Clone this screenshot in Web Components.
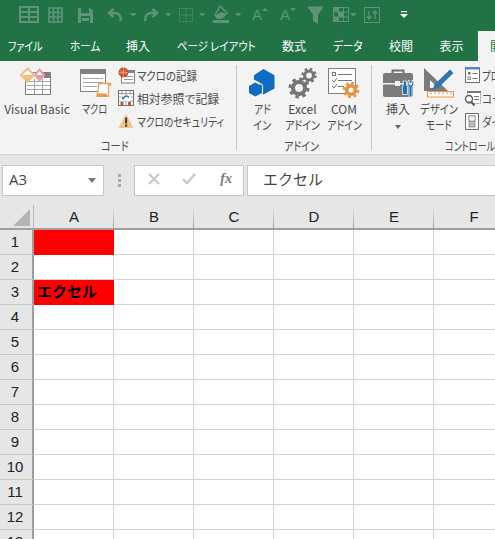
<!DOCTYPE html>
<html lang="ja">
<head>
<meta charset="utf-8">
<style>
  html, body { margin: 0; padding: 0; height: 539px; overflow: hidden; background: #fff; }
  body { font-family: "Noto Sans CJK JP", "Noto Sans", sans-serif; width: 495px; }
</style>
</head>
<body>
<excel-qat></excel-qat>
<excel-tabs></excel-tabs>
<excel-ribbon>
  <ribbon-group label="コード" label-w="28" width="237">
    <big-button w="74"><svg-icon name="vb"></svg-icon><span>Visual Basic</span></big-button>
    <big-button w="40"><svg-icon name="macro" style="margin:2px 0 0 4px"></svg-icon><span><narrow-text w="25">マクロ</narrow-text></span></big-button>
    <small-column>
      <small-button text="マクロの記録" w="60"><svg-icon name="rec"></svg-icon></small-button>
      <small-button text="相対参照で記録" w="82"><svg-icon name="rel"></svg-icon></small-button>
      <small-button text="マクロのセキュリティ" w="87"><svg-icon name="warn"></svg-icon></small-button>
    </small-column>
  </ribbon-group>
  <ribbon-group label="アドイン" label-w="35" width="135" pad="8">
    <big-button w="34"><svg-icon name="addin" style="margin-top:2px"></svg-icon><span><narrow-text w="17">アド</narrow-text><br><narrow-text w="18">イン</narrow-text></span></big-button>
    <big-button w="47"><svg-icon name="gears" style="margin-top:2px"></svg-icon><span>Excel<br><narrow-text w="35">アドイン</narrow-text></span></big-button>
    <big-button w="36"><svg-icon name="com" style="margin-top:2px"></svg-icon><span>COM<br><narrow-text w="35">アドイン</narrow-text></span></big-button>
  </ribbon-group>
  <ribbon-group label="コントロール" label-w="50" width="200" pad="3" last>
    <big-button w="46"><svg-icon name="tools" style="margin-top:2px"></svg-icon><span>挿入<br><caret-mark></caret-mark></span></big-button>
    <big-button w="36"><svg-icon name="design" style="margin-top:1px"></svg-icon><span><narrow-text w="38">デザイン</narrow-text><br><narrow-text w="26">モード</narrow-text></span></big-button>
    <small-column style="margin-left:7px">
      <small-button text="プロパティ" w="42" gap="1"><svg-icon name="prop"></svg-icon></small-button>
      <small-button text="コードの表示" w="60" gap="1"><svg-icon name="code"></svg-icon></small-button>
      <small-button text="ダイアログの実行" w="80" gap="1"><svg-icon name="dlg"></svg-icon></small-button>
    </small-column>
  </ribbon-group>
</excel-ribbon>
<formula-bar cell="A3" value="エクセル"></formula-bar>
<sheet-grid></sheet-grid>

<script>
// アイコンは全部ここにまとめる
const G = '#808080';
const Q = '#5f9479';
const ICONS = {
  vb: [34, 32, `
    <rect x="5.5" y="6.5" width="25" height="22" fill="#fff" stroke="${G}"/>
    <rect x="24" y="6" width="7" height="6" fill="${G}"/>
    <path d="M7 15.500h23M7 19.500h23M7 23.500h23M14.500 13v15M22.500 13v15" stroke="#a6a6a6" fill="none"/>
    <path d="M7.500 2.500l6.500 6.500-6.500 6.500-6.500-6.500z" fill="#fff" stroke="#edc07f" stroke-width="2"/>
    <path d="M2 9l5.500 6 6-6z" fill="#edc07f"/>
    <path d="M19.500 3.500l4.500 5.500-4.500 5.500-4.500-5.500z" fill="#fff" stroke="#e79aa6" stroke-width="2"/>
    <path d="M15.500 9l4 5 4-5z" fill="#e79aa6"/>`],
  macro: [32, 30, `
    <rect x="0.500" y="1.500" width="25" height="22" fill="#fff" stroke="${G}"/>
    <rect x="0" y="1" width="26" height="5" fill="${G}"/>
    <path d="M3 10.500h20M3 14.500h20M3 18.500h14" stroke="#a6a6a6" fill="none"/>
    <path d="M19 15.500h11.500v1.500h-2v11h-11z" fill="#fff" stroke="#e9a15b" stroke-width="1.300"/>
    <path d="M16.500 25.500h10l1 3.500h-11z" fill="#e9974a"/>`],
  rec: [17, 17, `
    <rect x="3.500" y="3.500" width="13" height="12.500" fill="#fff" stroke="${G}"/>
    <rect x="9" y="3" width="8" height="3" fill="${G}"/>
    <path d="M6 9.500h9M6 12.500h9" stroke="#999"/>
    <circle cx="5.500" cy="5.500" r="5" fill="#c9502a"/>
    <path d="M2 3.500l7 4M2.500 7.500l6-5M5.500 1v9M1 5.500h9" stroke="#ee9c6c" stroke-width=".8"/>`],
  rel: [17, 17, `
    <rect x=".5" y=".5" width="15" height="15" fill="#fff" stroke="#6e6e6e"/>
    <path d="M.5 3.500h15M.5 7h15M.5 11h15M4 .5v15M8 .5v15M12 .5v15" stroke="#8a8a8a" stroke-width=".8"/>
    <rect x="3" y="5" width="10" height="6" fill="#fff"/>
    <path d="M5 9c.5-3 4-4 6-1.500" stroke="#2a7ab8" stroke-width="1.500" fill="none"/>
    <path d="M3.500 6.500l3 1-2 2.500z" fill="#2a7ab8"/>
    <rect x="2.500" y="12" width="3" height="3" fill="#c8562e"/><rect x="10" y="12" width="3" height="3" fill="#c8562e"/>`],
  warn: [17, 17, `
    <path d="M8 1l7.500 14h-15z" fill="#eec689"/>
    <rect x="7" y="4.500" width="2.200" height="6" fill="#444"/>
    <rect x="7" y="11.500" width="2.200" height="2.200" fill="#444"/>`],
  addin: [28, 30, `
    <path d="M15.500 1l11 6.200v13.300l-11 6-4-2.200v-9.800l-5.500-3v-4.300z" fill="#0f6cc4"/>
    <path d="M7.300 14.500l6.400 3.400v7l-6.400 3.600-6.300-3.600v-7z" fill="#0f6cc4"/>
    <path d="M14.600 17l-7.300-3.800" stroke="#f3f3f3" stroke-width="1.200"/><path d="M14.500 17.500v8" stroke="#f3f3f3" stroke-width="1.200"/>`],
  gears: [28, 31, `
    <g fill="none" stroke="#757575">
      <circle cx="10" cy="20" r="6" stroke-width="4"/>
      <circle cx="10" cy="20" r="9" stroke-width="3" stroke-dasharray="3.500 3.560"/>
      <circle cx="20" cy="7.500" r="4.400" stroke-width="3"/>
      <circle cx="20" cy="7.500" r="6.500" stroke-width="2.400" stroke-dasharray="2.500 2.600"/>
    </g>`],
  com: [32, 32, `
    <rect x=".5" y=".5" width="27" height="25" fill="#fff" stroke="${G}"/>
    <rect x="4.500" y="4.500" width="3" height="3" fill="none" stroke="#777"/>
    <path d="M10 6.500h14M10 12.500h14M10 18.500h6" stroke="#777" fill="none"/>
    <path d="M4 12l2 2 3-4M4 18l2 2 3-4" stroke="#777" fill="none"/>
    <circle cx="23" cy="22" r="4.300" fill="none" stroke="#e8933c" stroke-width="3.600"/>
    <circle cx="23" cy="22" r="7" fill="none" stroke="#e8933c" stroke-width="2.600" stroke-dasharray="2.800 2.700"/>`],
  tools: [31, 31, `
    <path d="M9.500 5V2.500h11V5" fill="none" stroke="#6f6f6f" stroke-width="2"/>
    <path d="M2 5h26a2 2 0 0 1 2 2v8H0V7a2 2 0 0 1 2-2z" fill="#7a7a7a"/>
    <path d="M0 16.500h30V27a2 2 0 0 1-2 2H2a2 2 0 0 1-2-2z" fill="#7a7a7a"/>
    <rect x="12" y="13" width="5" height="5" fill="#f3f3f3"/>
    <path d="M20 13h3.500v4l1 1.500v8h-5v-8l1-1.500z" fill="#1f6fb5" stroke="#f3f3f3" stroke-width=".8"/>
    <path d="M26 12v4l1.500 1.500L29 16v-4c2 1 2.500 4 1 6l-1 1v10h-3V19c-2-2-2-5 0-7z" fill="#1f6fb5" stroke="#f3f3f3" stroke-width=".8"/>`],
  design: [32, 31, `
    <path d="M1 1l24 23H1z" fill="#7a7a7a"/>
    <path d="M7 13l8 8H7z" fill="#f3f3f3"/>
    <path d="M27 2.500l3.500 3.500L15 21l-5.500 2 2-5.500z" fill="#2e75b6"/>
    <rect x="4.500" y="24.500" width="26" height="5.500" fill="#fff" stroke="#e6964a"/>
    <path d="M8 25v2.500M12 25v2.500M16 25v2.500M20 25v2.500M24 25v2.500M28 25v2.500" stroke="#e6964a"/>`],
  prop: [16, 17, `
    <rect x=".5" y=".5" width="14" height="15" fill="#fff" stroke="#6e6e6e"/>
    <rect x="0" y="0" width="15" height="2.500" fill="#4d88c4"/>
    <rect x="3" y="5" width="2.500" height="2.500" fill="#6e6e6e"/><rect x="3" y="10" width="2.500" height="2.500" fill="none" stroke="#6e6e6e" stroke-width=".8"/>
    <path d="M7.500 6.500h5M7.500 11.500h5" stroke="#6e6e6e"/>`],
  code: [17, 17, `
    <rect x="3.500" y="1.500" width="13" height="12" fill="#fff" stroke="#999" stroke-dasharray="2 1"/>
    <rect x="3" y="1" width="14" height="2" fill="#777"/>
    <path d="M10 6.500h5M10 9.500h5" stroke="#777"/>
    <circle cx="5" cy="9" r="3.500" fill="#fff" stroke="#5c5c5c" stroke-width="1.400"/>
    <path d="M7.500 12l3 3.500" stroke="#5c5c5c" stroke-width="2"/>`],
  dlg: [16, 18, `
    <rect x=".5" y=".5" width="13" height="16" fill="#fff" stroke="#6e6e6e"/>
    <rect x="4" y="3" width="6" height="11" fill="#bdbdbd" stroke="#6e6e6e" stroke-width=".6"/>
    <rect x="4" y="3" width="6" height="5" fill="#f3f3f3" stroke="#6e6e6e" stroke-width=".6"/>`],
  // クイックアクセス
  q1: [20, 17, `<path d="M1 1h18v15H1zM1 6h18M1 11h18M10 1v15" fill="none" stroke="${Q}" stroke-width="2"/>`],
  q2: [15, 16, `<path d="M1 1h13v14H1zM1 5.500h13M1 10h13M5.500 1v14M10 1v14" fill="none" stroke="${Q}" stroke-width="1.700"/>`],
  q3: [15, 16, `<path d="M0 1h12l3 3v12H0z" fill="${Q}"/><rect x="3" y="1" width="8" height="5" fill="#217346"/><rect x="3" y="9" width="9" height="7" fill="#217346"/><rect x="4" y="11" width="7" height="3" fill="${Q}"/>`],
  undo: [15, 14, `<path d="M13.500 13c1-5-1.500-8-5.500-8H2.500M6.500 1L2 5l4.500 4" fill="none" stroke="${Q}" stroke-width="2.400"/>`],
  redo: [15, 14, `<path d="M1.500 13c-1-5 1.500-8 5.500-8h5.500M8.500 1L13 5l-4.500 4" fill="none" stroke="${Q}" stroke-width="2.400"/>`],
  arrow: [7, 4, `<path d="M0 0h6.500L3.250 3.500z" fill="${Q}"/>`],
  bord: [14, 14, `<path d="M.5.500h13v13H.500zM.5 7h13M7 .500v13" fill="none" stroke="${Q}" stroke-dasharray="1 1"/>`],
  fill: [16, 17, `<rect x="0" y="14" width="16" height="3" fill="${Q}"/><path d="M7 0l7 7-5 5H4L2 9z" fill="none" stroke="${Q}" stroke-width="1.500"/><path d="M3 9l5-3 5 2-4 4H4z" fill="${Q}"/>`],
  funnel: [17, 18, `<path d="M0 .5h17l-6 8V18l-5-3V8.500z" fill="${Q}"/>`],
  cond: [16, 15, `<rect x=".5" y=".5" width="15" height="14" fill="none" stroke="${Q}"/><path d="M.5 5h15M.5 10h15M5.500.500v14M10.500.500v14" stroke="${Q}"/><rect x="1" y="1" width="4" height="3.500" fill="${Q}"/><rect x="6" y="5" width="4" height="5" fill="${Q}"/><rect x="1" y="10" width="4" height="4" fill="${Q}"/>`],
  sort: [16, 16, `<rect x=".5" y=".5" width="15" height="15" fill="none" stroke="${Q}"/><path d="M5 4v8M2.800 9.500L5 12l2.200-2.500M11 12V4M8.800 6.500L11 4l2.200 2.500" fill="none" stroke="${Q}" stroke-width="1.200"/>`],
  more: [8, 7, `<path d="M1 0h6v1.200H1zM0 3h8L4 7z" fill="#fff"/>`]
};

class SvgIcon extends HTMLElement {
  connectedCallback() {
    const [w, h, body] = ICONS[this.getAttribute('name')];
    this.attachShadow({ mode: 'open' }).innerHTML = `
      <style>:host { display: block; flex: none; line-height: 0; } svg { display: block; overflow: visible; }</style>
      <svg width="${w}" height="${h}" viewBox="0 0 ${w} ${h}">${body}</svg>`;
  }
}
customElements.define('svg-icon', SvgIcon);

class CaretMark extends HTMLElement {
  constructor() {
    super();
    this.attachShadow({ mode: 'open' }).innerHTML = `
      <style>:host { display: inline-block; width: 0; height: 0; border: 3.500px solid transparent; border-top: 4px solid #666; border-bottom: 0; vertical-align: middle; }</style>`;
  }
}
customElements.define('caret-mark', CaretMark);

// 左端からの余白と一緒に並べる
const QAT = [['q1', 19], ['q2', 9], ['q3', 15], ['undo', 14], ['arrow', 8], ['redo', 7], ['arrow', 6], ['bord', 7], ['arrow', 6], ['fill', 7], ['arrow', 6], ['text', 10, 'A', 'up'], ['text', 15, 'A', 'down'], ['funnel', 14], ['cond', 9], ['arrow', 1], ['sort', 7], ['more', 20]];

class ExcelQat extends HTMLElement {
  connectedCallback() {
    const items = QAT.map(([n, m, t, dir]) => n === 'text'
      ? `<b class="a ${dir}" style="margin-left:${m}px">${t}</b>`
      : `<svg-icon name="${n}" style="margin-left:${m}px"></svg-icon>`).join('');
    this.attachShadow({ mode: 'open' }).innerHTML = `
      <style>
        :host { display: flex; align-items: center; height: 31px; background: #217346; padding-bottom: 2px; box-sizing: border-box; }
        .a { font: 400 15px "Liberation Sans", sans-serif; color: ${Q}; width: 13px; position: relative; line-height: 16px; }
        .a::after { content: ""; position: absolute; left: 10px; top: 0; border: 3px solid transparent; }
        .up::after { border-bottom-color: ${Q}; top: -2px; }
        .down::after { border-top-color: ${Q}; top: 1px; }
      </style>${items}`;
  }
}
customElements.define('excel-qat', ExcelQat);

// 文字の幅はリボンのフォントに合わせて指定する
const TABS = [['ファイル', 35], ['ホーム', 30], ['挿入', 24], ['ページ&nbsp;レイアウト', 79], ['数式', 24], ['データ', 30], ['校閲', 24], ['表示', 24]];

class ExcelTabs extends HTMLElement {
  connectedCallback() {
    const tabs = TABS.map(([t, w]) => `<div class="tab"><narrow-text w="${w}">${t}</narrow-text></div>`).join('');
    this.attachShadow({ mode: 'open' }).innerHTML = `
      <style>
        :host { display: flex; height: 30px; background: #217346; padding-left: 8px; gap: 26.500px; overflow: hidden; color: #fff; font-size: 12px; font-feature-settings: "palt"; }
        .tab { flex: none; line-height: 30px; white-space: nowrap; }
        .active { background: #f3f3f3; color: #217346; padding-left: 12px; width: 40px; margin-left: -12px; }
      </style>${tabs}<div class="tab active">開発</div>`;
  }
}
customElements.define('excel-tabs', ExcelTabs);

class ExcelRibbon extends HTMLElement {
  constructor() {
    super();
    this.attachShadow({ mode: 'open' }).innerHTML = `
      <style>
        :host { display: flex; height: 94px; background: #f3f3f3; border-bottom: 1px solid #d2d2d2; box-sizing: border-box; overflow: hidden; color: #4a4a4a; font-size: 12px; font-feature-settings: "palt"; }
      </style><slot></slot>`;
  }
}
customElements.define('excel-ribbon', ExcelRibbon);

class RibbonGroup extends HTMLElement {
  connectedCallback() {
    const w = this.getAttribute('width');
    const pad = this.getAttribute('pad') || 0;
    const last = this.hasAttribute('last');
    this.attachShadow({ mode: 'open' }).innerHTML = `
      <style>
        :host { display: flex; flex: none; flex-direction: column; width: ${w}px; box-sizing: border-box; position: relative; }
        .items { display: flex; height: 76px; padding: 5px 0 0 ${pad}px; box-sizing: border-box; }
        .label { line-height: 16px; white-space: nowrap; margin-top: 1px; text-align: ${last ? 'left' : 'center'}; padding-right: ${last ? 0 : 7}px; padding-left: ${last ? 73 : 0}px; }
        .sep { position: absolute; right: 0; top: 4px; bottom: 4px; width: 1px; background: #c6c6c6; }
      </style>
      <div class="items"><slot></slot></div>
      <div class="label"><narrow-text w="${this.getAttribute('label-w')}">${this.getAttribute('label')}</narrow-text></div>
      ${last ? '' : '<div class="sep"></div>'}`;
  }
}
customElements.define('ribbon-group', RibbonGroup);

class BigButton extends HTMLElement {
  constructor() {
    super();
    this.attachShadow({ mode: 'open' }).innerHTML = `
      <style>
        :host { display: flex; flex: none; flex-direction: column; align-items: center; text-align: center; line-height: 16px; white-space: nowrap; }
        .icon { height: 34px; display: flex; align-items: flex-start; justify-content: center; }
        .text { margin-top: 1px; }
        ::slotted(span) { display: block; }
      </style>
      <div class="icon"><slot name="icon"></slot></div>
      <div class="text"><slot></slot></div>`;
  }
  connectedCallback() {
    this.style.width = this.getAttribute('w') + 'px';
    const icon = this.querySelector('svg-icon');
    if (icon) icon.slot = 'icon';
  }
}
customElements.define('big-button', BigButton);

class SmallColumn extends HTMLElement {
  constructor() {
    super();
    this.attachShadow({ mode: 'open' }).innerHTML = `
      <style>:host { display: flex; flex: none; flex-direction: column; gap: 5.300px; margin-left: 4px; }</style><slot></slot>`;
  }
}
customElements.define('small-column', SmallColumn);

class SmallButton extends HTMLElement {
  connectedCallback() {
    this.attachShadow({ mode: 'open' }).innerHTML = `
      <style>
        :host { display: flex; align-items: center; height: 18px; gap: ${this.getAttribute('gap') || 2}px; white-space: nowrap; }
        .i { width: 17px; display: flex; justify-content: center; }
      </style>
      <div class="i"><slot></slot></div><narrow-text w="${this.getAttribute('w')}">${this.getAttribute('text')}</narrow-text>`;
  }
}
customElements.define('small-button', SmallButton);

class FormulaBar extends HTMLElement {
  connectedCallback() {
    this.attachShadow({ mode: 'open' }).innerHTML = `
      <style>
        :host { display: flex; height: 50px; background: #e6e6e6; padding: 10px 0 9px 2px; box-sizing: border-box; }
        .box { background: #fff; border: 1px solid #c6c6c6; box-sizing: border-box; height: 31px; flex: none; display: flex; align-items: center; }
        .name { width: 102px; padding: 0 7px 3px 6px; justify-content: space-between; color: #444; font: 15px "Open Sans", sans-serif; }
        .name i { border: 4px solid transparent; border-top: 5px solid #777; border-bottom: 0; margin-top: 3px; }
        .dots { width: 30px; flex: none; display: flex; flex-direction: column; gap: 2px; align-items: center; justify-content: center; }
        .dots b { width: 3px; height: 3px; background: #a9a9a9; }
        .fx { width: 110px; justify-content: space-between; padding: 0 11px 3px 12px; }
        .fx svg + svg { margin-left: -3px; }
        .fx em { font: italic 700 14px "Liberation Serif", serif; color: #7a7a7a; }
        .input { margin-left: 3px; flex: 1; padding: 0 0 5px 15px; font-size: 15px; color: #444; border-right: 0; }
      </style>
      <div class="box name"><span>${this.getAttribute('cell')}</span><i></i></div>
      <div class="dots"><b></b><b></b><b></b></div>
      <div class="box fx">
        <svg width="14" height="12" viewBox="0 0 14 12"><path d="M2 1l10 10M12 1L2 11" stroke="#c8c8c8" stroke-width="2.200"/></svg>
        <svg width="14" height="12" viewBox="0 0 14 12"><path d="M1 6l4 4 8-9" fill="none" stroke="#c8c8c8" stroke-width="2.400"/></svg>
        <em>fx</em>
      </div>
      <div class="box input">${this.getAttribute('value')}</div>`;
  }
}
customElements.define('formula-bar', FormulaBar);

class SheetGrid extends HTMLElement {
  connectedCallback() {
    const cols = ['A', 'B', 'C', 'D', 'E', 'F', 'G'];
    const red = { 1: '', 3: 'エクセル' };
    let html = `<div class="corner"><i></i></div>` + cols.map(c => `<div class="ch">${c}</div>`).join('');
    for (let r = 1; r <= 13; r++) {
      html += `<div class="rh">${r}</div>`;
      cols.forEach(c => {
        const isRed = c === 'A' && r in red;
        html += `<div class="c${isRed ? ' red' : ''}">${isRed ? red[r] : ''}</div>`;
      });
    }
    this.attachShadow({ mode: 'open' }).innerHTML = `
      <style>
        :host { display: grid; grid-template-columns: 34px repeat(7, 80px); grid-template-rows: 25px; grid-auto-rows: 25px; background: #fff; font: 15px "Liberation Sans", sans-serif; color: #222; }
        .corner { background: #e6e6e6; border-right: 1px solid #b8b8b8; border-bottom: 2px solid #9f9f9f; box-sizing: border-box; position: relative; }
        .corner i { position: absolute; right: 3px; bottom: 2px; width: 0; height: 0; border-style: solid; border-width: 0 0 17px 17px; border-color: transparent transparent #b4b4b4 transparent; }
        .ch { background: #e6e6e6; text-align: center; line-height: 23px; box-sizing: border-box; border-bottom: 2px solid #9f9f9f; position: relative; }
        .ch::after { content: ""; position: absolute; right: 0; top: 2px; bottom: 0; width: 1px; background: linear-gradient(#e0e0e0, #a0a0a0); }
        .rh { background: #e6e6e6; text-align: center; line-height: 24px; box-sizing: border-box; border-right: 2px solid #9f9f9f; border-bottom: 1px solid #c8c8c8; padding-right: 2px; }
        .c { box-sizing: border-box; border-right: 1px solid #d4d4d4; border-bottom: 1px solid #d4d4d4; }
        .red { background: #f00; border-color: #f00; border-bottom: 0; font: 700 15px/22px "Noto Sans CJK JP", sans-serif; color: #000; padding-left: 3px; white-space: nowrap; }
      </style>${html}`;
  }
}
customElements.define('sheet-grid', SheetGrid);

// 参照画像のかなは幅が狭いので横に縮める。他の要素の後で定義すること
class NarrowText extends HTMLElement {
  constructor() {
    super();
    this.attachShadow({ mode: 'open' }).innerHTML = `
      <style>
        :host { display: inline-block; white-space: nowrap; text-align: left; vertical-align: top; }
        span { display: inline-block; transform-origin: 0 50%; }
      </style><span><slot></slot></span>`;
  }
  connectedCallback() {
    const span = this.shadowRoot.querySelector('span');
    const w = parseFloat(this.getAttribute('w'));
    const natural = span.offsetWidth;
    this.style.width = w + 'px';
    span.style.transform = `scaleX(${w / natural})`;
  }
}
customElements.define('narrow-text', NarrowText);
</script>
</body>
</html>
